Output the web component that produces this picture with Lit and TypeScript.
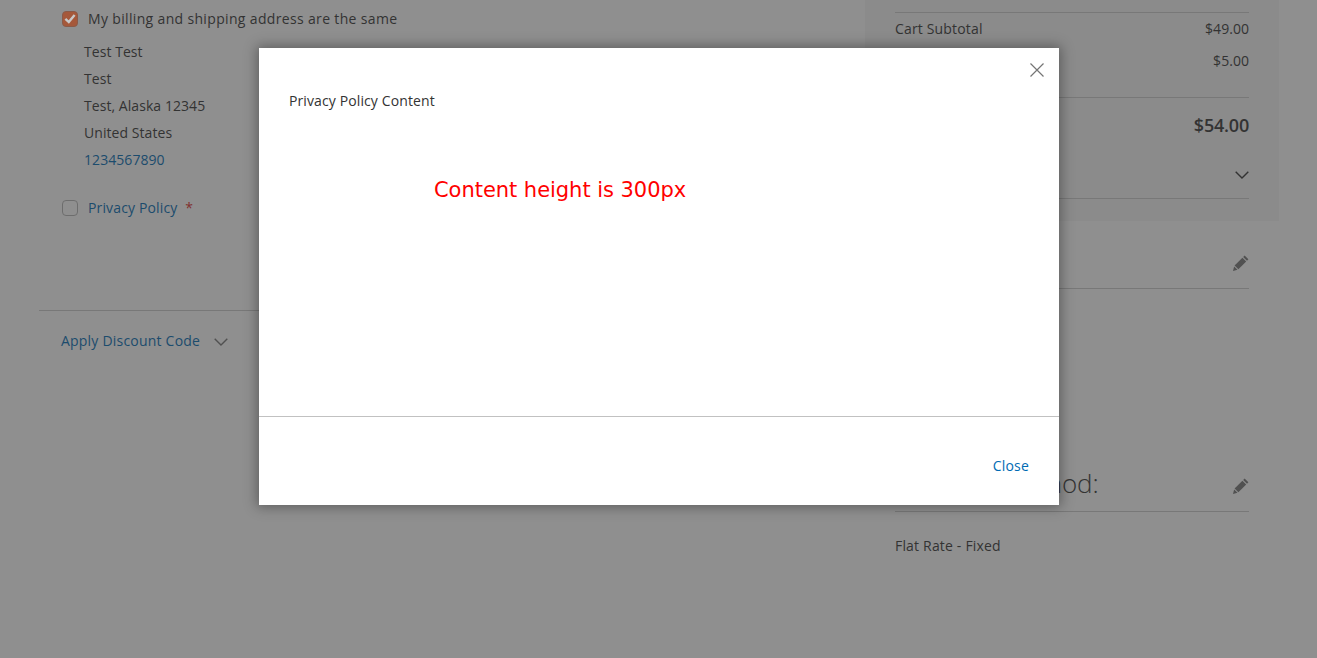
import { LitElement, html, css, svg } from "lit";
import { customElement } from "lit/decorators.js";

const chevron = svg`<svg class="chev" width="14" height="8" viewBox="0 0 14 8" fill="none" stroke="currentColor" stroke-width="1.4"><path d="M0.7 0.8 L7 7 L13.3 0.8"/></svg>`;
const pencil = svg`<svg class="pencil" width="16" height="16" viewBox="0 0 16 16" fill="#757575"><path d="M11.6 0.6 L15.4 4.3 L14 5.7 L10.2 2 Z"/><path d="M9.4 2.8 L13.2 6.5 L5.4 14.2 L1.6 10.5 Z"/><path d="M1.1 11.4 L4.5 14.8 L0 16 Z"/></svg>`;
const check = svg`<svg width="16" height="16" viewBox="0 0 16 16" fill="none" stroke="#c8c8c8" stroke-width="2.4"><path d="M3.4 7.8 L6.8 11 L12.6 4"/></svg>`;
const closeX = svg`<svg width="14" height="14" viewBox="0 0 14 14" fill="none" stroke="#757575" stroke-width="1.2"><path d="M0.5 0.5 L13.5 13.5 M13.5 0.5 L0.5 13.5"/></svg>`;

@customElement("app-root")
export class AppRoot extends LitElement {
  static styles = css`
    :host { display: block; height: 658px; position: relative; overflow: hidden; background: #fff; color: #333;
      font-family: "Open Sans", sans-serif; font-size: 14px; line-height: 27px; }
    a { color: #006bb4; text-decoration: none; }
    .page { display: flex; padding-left: 39px; height: 658px; box-sizing: border-box; }
    .main { width: 786px; flex: none; }
    .side { width: 414px; flex: none; margin-left: 40px; }

    .check-row { display: flex; align-items: center; gap: 10px; padding-left: 23px; height: 27px; }
    .billing { margin-top: 5px; letter-spacing: 0.34px; }
    .box { width: 16px; height: 16px; box-sizing: border-box; border: 1px solid #b4b4b4; border-radius: 4px; flex: none; }
    .box.on { position: relative; z-index: 1; background: #a5583a; border: 1px solid #8a5a48; }
    .box svg { display: block; margin: -1px; }
    .address { padding-left: 45px; margin-top: 6px; letter-spacing: 0.06px; }
    .privacy { margin-top: 21px; letter-spacing: 0.14px; }
    .req { color: #e02b27; margin-left: 4px; }
    .discount { margin-top: 89px; border-top: 1px solid #ccc; padding: 16px 0 0 22px; display: flex; align-items: center; gap: 14px; color: #757575; letter-spacing: 0.21px; }
    .discount .chev { margin-top: 2px; }

    .summary { background: #f5f5f5; padding: 12px 30px 0; height: 221px; box-sizing: border-box; letter-spacing: 0.16px; }
    .rows { border-top: 1px solid #ccc; border-bottom: 1px solid #ccc; height: 84px; }
    .row { display: flex; justify-content: space-between; height: 31.5px; align-items: center; }
    .row span + span { letter-spacing: 0.04px; }
    .total { display: flex; justify-content: flex-end; font-size: 18px; font-weight: 600; height: 54px; align-items: center; letter-spacing: -0.2px; }
    .fold { display: flex; justify-content: flex-end; align-items: center; height: 46px; border-bottom: 1px solid #ccc; }
    .block { padding: 0 30px; }
    .head { display: flex; justify-content: space-between; align-items: center; border-bottom: 1px solid #ccc; height: 68px; padding-top: 16px; box-sizing: border-box; }
    .spacer { height: 155px; }
    .title { font-size: 26px; font-weight: 300; white-space: nowrap; letter-spacing: -0.13px; margin-top: -5px; }
    .method { margin-top: 20px; letter-spacing: 0.18px; }

    .overlay { position: absolute; inset: 0; background: rgba(51,51,51,.55); }
    .modal { position: relative; width: 800px; height: 457px; margin: 48px 0 0 259px; background: #fff;
      box-shadow: 0 0 12px 2px rgba(0,0,0,.35); display: flex; flex-direction: column; }
    .close { position: absolute; top: 15px; right: 15px; width: 14px; height: 14px; }
    .close svg { display: block; }
    .content { flex: none; height: 369px; box-sizing: border-box; border-bottom: 1px solid #c1c1c1; padding: 39px 30px 0; letter-spacing: 0.11px; }
    .red { color: #f00; font-family: "DejaVu Sans", sans-serif; font-size: 21px; line-height: 26px; margin: 63px 0 0 145px; letter-spacing: -0.04px; }
    .foot { display: flex; justify-content: flex-end; padding: 35px 30px 0; letter-spacing: 0.2px; }
  `;

  render() {
    return html`
      <div class="page">
        <div class="main">
          <div class="check-row billing">
            <span class="box on">${check}</span>
            <span>My billing and shipping address are the same</span>
          </div>
          <div class="address">
            <div>Test Test</div>
            <div>Test</div>
            <div>Test, Alaska 12345</div>
            <div>United States</div>
            <div><a href="#">1234567890</a></div>
          </div>
          <div class="check-row privacy">
            <span class="box"></span>
            <span><a href="#">Privacy Policy</a><span class="req"> *</span></span>
          </div>
          <div class="discount"><a href="#">Apply Discount Code</a>${chevron}</div>
        </div>
        <div class="side">
          <div class="summary">
            <div class="rows">
              <div class="row"><span>Cart Subtotal</span><span>$49.00</span></div>
              <div class="row"><span>Shipping</span><span>$5.00</span></div>
            </div>
            <div class="total"><span>$54.00</span></div>
            <div class="fold">${chevron}</div>
          </div>
          <div class="block">
            <div class="head"><span class="title">Ship To:</span>${pencil}</div>
            <div class="spacer"></div>
            <div class="head"><span class="title">Shipping Method:</span>${pencil}</div>
            <div class="method">Flat Rate - Fixed</div>
          </div>
        </div>
      </div>
      <div class="overlay">
        <div class="modal" role="dialog">
          <div class="close">${closeX}</div>
          <div class="content">
            <div>Privacy Policy Content</div>
            <div class="red">Content height is 300px</div>
          </div>
          <div class="foot"><a href="#">Close</a></div>
        </div>
      </div>
    `;
  }
}
